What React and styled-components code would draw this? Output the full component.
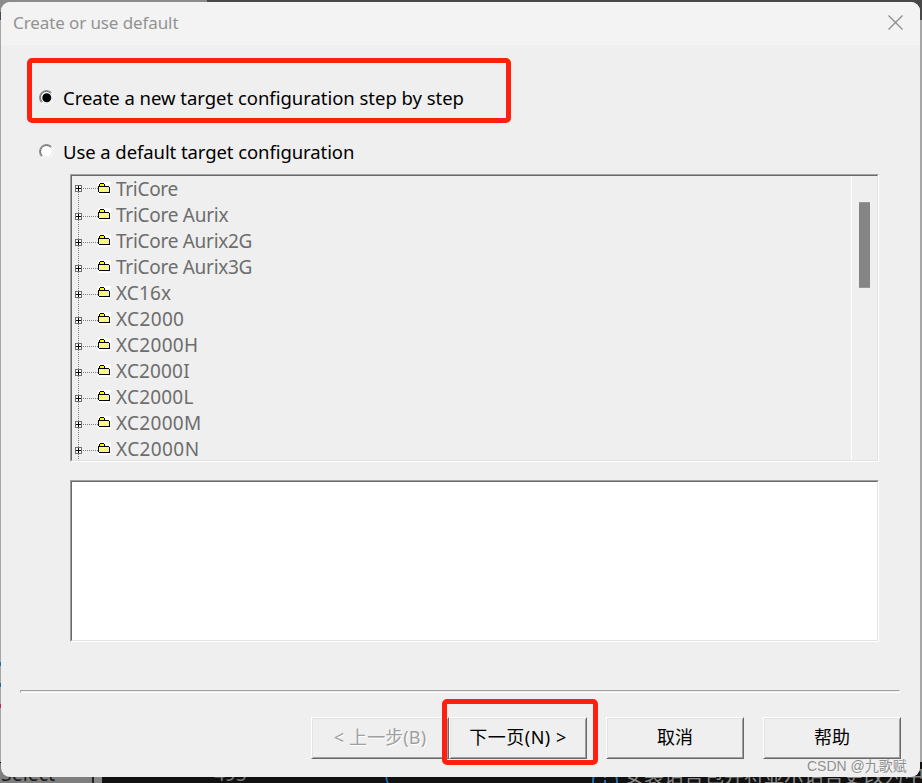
import styled, { createGlobalStyle } from "styled-components";

const GlobalStyle = createGlobalStyle`
  * {
    box-sizing: border-box;
  }
  body {
    margin: 0;
    overflow: hidden;
    font-family: "Noto Sans", "Noto Sans CJK SC", sans-serif;
  }
`;

const Screen = styled.main`
  position: relative;
  width: 922px;
  height: 783px;
  padding: 2px 2px 5px 1px;
  overflow: hidden;
  background: linear-gradient(to bottom, #484848 20px, #a6a6a6 20px, #a6a6a6 762px, #111 762px);
`;
const TopStrip = styled.div`
  position: absolute;
  left: 0;
  top: 0;
  width: 207px;
  height: 12px;
  background: #8b8b8b;
`;
const BottomStrip = styled.div`
  position: absolute;
  left: 0;
  bottom: 0;
  width: 100%;
  height: 20px;
  overflow: hidden;
  background: linear-gradient(to right, #7e7e7e 92px, #222 92px, #222 94px, #888 94px, #888 102px, #111 102px);
  svg {
    position: absolute;
    left: 591px;
    top: 4px;
  }
`;
const StripText = styled.span`
  position: absolute;
  left: ${({ $left }) => $left}px;
  top: ${({ $top }) => $top}px;
  font-size: ${({ $size }) => $size || 18}px;
  line-height: 24px;
  white-space: nowrap;
  color: ${({ $color }) => $color};
`;
const EdgeMark = styled.div`
  position: absolute;
  left: 0;
  top: ${({ $top }) => $top}px;
  width: 1px;
  height: 4px;
  background: ${({ $color }) => $color};
`;

const Dialog = styled.section`
  position: relative;
  display: flex;
  flex-direction: column;
  width: 919px;
  height: 775px;
  overflow: hidden;
  border-radius: 9px;
  background: #efefef;
`;
const TitleBar = styled.header`
  display: flex;
  align-items: center;
  justify-content: space-between;
  height: 43px;
  padding: 0 17px 3px 12px;
  background: #f3f3f3;
  color: #929292;
  h1 {
    margin: 0;
    font-size: 17px;
    font-weight: 400;
    letter-spacing: -0.1px;
  }
  svg {
    display: block;
  }
`;
const Content = styled.div`
  display: flex;
  flex-direction: column;
  padding: 39px 41px 0 38px;
`;
const Option = styled.label`
  display: flex;
  align-items: center;
  gap: 9px;
  height: 28px;
  padding-bottom: 1px;
  margin-bottom: ${({ $gap }) => $gap}px;
  font-size: 18.5px;
  line-height: 25px;
  letter-spacing: ${({ $spacing }) => $spacing || 0}px;
  white-space: nowrap;
  color: #000;
  svg {
    flex: none;
  }
`;
const Sunken = styled.div`
  border: 1px solid;
  border-color: #a0a0a0 #fff #fff #a0a0a0;
  width: 809px;
  margin: ${({ $top }) => $top || 0}px 0 0 31px;
`;
const SunkenInner = styled.div`
  display: flex;
  height: ${({ $height }) => $height}px;
  overflow: hidden;
  border: 1px solid;
  border-color: #696969 #e3e3e3 #e3e3e3 #696969;
  background: ${({ $bg }) => $bg};
`;
const Tree = styled.ul`
  flex: 1;
  margin: 0;
  padding: 0 0 0 3px;
  list-style: none;
`;
const TreeRow = styled.li`
  display: flex;
  height: 26px;
  font-size: 19px;
  line-height: 27px;
  letter-spacing: ${({ $spacing }) => $spacing}px;
  white-space: nowrap;
  color: #6d6d6d;
  svg {
    flex: none;
    margin-right: 5px;
  }
`;
const ScrollBar = styled.div`
  width: 26px;
  padding: 26px 0 0 7px;
  border-left: 1px solid #fff;
`;
const Thumb = styled.div`
  width: 11px;
  height: 86px;
  border: solid #969696;
  border-width: 1px 0;
  background: #858585;
`;
const Divider = styled.hr`
  width: 880px;
  height: 3px;
  margin: 48px 0 0 19px;
  border: 1px solid;
  border-color: #a0a0a0 #fff #fff #a0a0a0;
`;
const Footer = styled.footer`
  display: flex;
  justify-content: flex-end;
  gap: 19px;
  padding: 24px 19px 0 0;
`;
const Pager = styled.div`
  display: flex;
`;
const Button = styled.button`
  width: 138px;
  height: 42px;
  padding: 0 0 2px;
  border: 1px solid;
  border-color: #fff #696969 #696969 #fff;
  box-shadow: inset 1px 1px #e3e3e3, inset -1px -1px #a0a0a0;
  background: #efefef;
  font-family: inherit;
  font-size: 18px;
  line-height: 24px;
  letter-spacing: ${({ $spacing }) => $spacing || 0}px;
  white-space: nowrap;
  color: #000;
  &:disabled {
    color: #a0a0a0;
    text-shadow: 1px 1px #fff;
  }
`;
const Highlight = styled.div`
  position: absolute;
  left: ${({ $left }) => $left}px;
  top: ${({ $top }) => $top}px;
  width: ${({ $width }) => $width}px;
  height: ${({ $height }) => $height}px;
  border: 5px solid #ff2010;
  border-radius: 5px;
  pointer-events: none;
`;
const Watermark = styled.div`
  position: absolute;
  left: 807px;
  top: 756px;
  font-family: "Liberation Sans", "Noto Sans CJK SC", sans-serif;
  font-size: 14px;
  line-height: 20px;
  white-space: nowrap;
  color: #8f8f8f;
  text-shadow: 1px 1px 1px #fff8;
`;

const devices = [
  { name: "TriCore", spacing: -0.3 },
  { name: "TriCore Aurix", spacing: -0.27 },
  { name: "TriCore Aurix2G", spacing: -0.28 },
  { name: "TriCore Aurix3G", spacing: -0.28 },
  { name: "XC16x", spacing: 0.1 },
  { name: "XC2000", spacing: 0.35 },
  { name: "XC2000H", spacing: 0.3 },
  { name: "XC2000I", spacing: 0.15 },
  { name: "XC2000L", spacing: 0.2 },
  { name: "XC2000M", spacing: 0.3 },
  { name: "XC2000N", spacing: 0.4 },
];

function RadioIcon({ checked }) {
  return (
    <svg width="15" height="15" viewBox="0 0 15 15">
      <circle cx="7.5" cy="7.5" r="7.3" fill="#fff" />
      <circle cx="7.5" cy="7.5" r="6" fill="none" stroke="#e0e0e0" />
      <path d="M2.6 12.4A6.9 6.9 0 0 1 12.4 2.6" fill="none" stroke="#949494" strokeWidth="1.2" />
      <path d="M3.2 11.8A6 6 0 0 1 11.8 3.2" fill="none" stroke="#6c6c6c" />
      {checked && <circle cx="7.8" cy="7.8" r="4.5" fill="#000" />}
    </svg>
  );
}

// expander, dotted connector and folder in one 36x26 cell
function NodeIcon({ first }) {
  const y = first ? 9 : 11;
  return (
    <svg width="36" height="26" viewBox="0 0 36 26" shapeRendering="crispEdges">
      <defs>
        <pattern id="dither" width="2" height="2" patternUnits="userSpaceOnUse">
          <rect width="2" height="2" fill="#fff" />
          <path d="M0 0H1V1H0ZM1 1H2V2H1Z" fill="#ffff00" />
        </pattern>
      </defs>
      <path d={`M3.5 ${first ? y + 5 : 0}V26`} stroke="#808080" strokeDasharray="1 1" />
      <path d={`M8 ${y + 3.5}H23`} stroke="#808080" strokeDasharray="1 1" />
      <rect x="0.5" y={y + 0.5} width="6" height="6" fill="#fff" stroke="#707070" />
      <path d={`M1 ${y + 3.5}H6M3.5 ${y + 1}V${y + 6}`} stroke="#000" />
      <rect x="23" y="6" width="13" height="13" fill="#fff" />
      <path d="M24 10H34V16H24Z" fill="url(#dither)" />
      <path d="M25 8H29V10H25Z" fill="#ffff00" />
      <path d="M25 7.5H29M24.5 8V10M29.5 8V10M24 10.5H34M23.5 10V16M34.5 11V16M24 16.5H35" stroke="#000" fill="none" />
    </svg>
  );
}

function App() {
  return (
    <>
      <GlobalStyle />
      <Screen>
        <TopStrip />
        <BottomStrip>
          <StripText $left={1} $top={-1} $size={19.5} $color="#1c1c1c">Select</StripText>
          <StripText $left={214} $top={-1} $size={19} $color="#777">495</StripText>
          <StripText $left={385} $top={0} $color="#2370b8">(</StripText>
          <svg width="28" height="28" viewBox="0 0 28 28" stroke="#2370b8" strokeWidth="2" fill="none">
            <circle cx="14" cy="14" r="12" />
            <path d="M14 9V11M14 13V20" />
          </svg>
          <StripText $left={624} $top={1} $size={20} $color="#888">安装语言包并将显示语言更改为中文</StripText>
        </BottomStrip>
        <EdgeMark $top={662} $color="#276b9c" />
        <EdgeMark $top={683} $color="#276b9c" />
        <EdgeMark $top={704} $color="#c62850" />
        <Dialog>
          <TitleBar>
            <h1>Create or use default</h1>
            <svg width="15" height="15" viewBox="0 0 15 15" stroke="#8c8c8c" strokeWidth="1.3">
              <path d="M0.5 0.5L14.5 14.5M14.5 0.5L0.5 14.5" />
            </svg>
          </TitleBar>
          <Content>
            <Option $gap={26} $spacing={-0.03}>
              <RadioIcon checked />
              Create a new target configuration step by step
            </Option>
            <Option $gap={8} $spacing={-0.08}>
              <RadioIcon />
              Use a default target configuration
            </Option>
            <Sunken>
              <SunkenInner $height={286} $bg="#efefef">
                <Tree>
                  {devices.map(({ name, spacing }, i) => (
                    <TreeRow key={name} $spacing={spacing}>
                      <NodeIcon first={i === 0} />
                      {name}
                    </TreeRow>
                  ))}
                </Tree>
                <ScrollBar>
                  <Thumb />
                </ScrollBar>
              </SunkenInner>
            </Sunken>
            <Sunken $top={18}>
              <SunkenInner $height={160} $bg="#fff" />
            </Sunken>
          </Content>
          <Divider />
          <Footer>
            <Pager>
              <Button disabled $spacing={0.1}>&lt; 上一步(B)</Button>
              <Button $spacing={0.5}>下一页(N) &gt;</Button>
            </Pager>
            <Button>取消</Button>
            <Button>帮助</Button>
          </Footer>
        </Dialog>
        <Highlight $left={27} $top={58} $width={484} $height={65} />
        <Highlight $left={442} $top={699} $width={156} $height={66} />
        <Watermark>CSDN @九歌赋</Watermark>
      </Screen>
    </>
  );
}

export default App;
